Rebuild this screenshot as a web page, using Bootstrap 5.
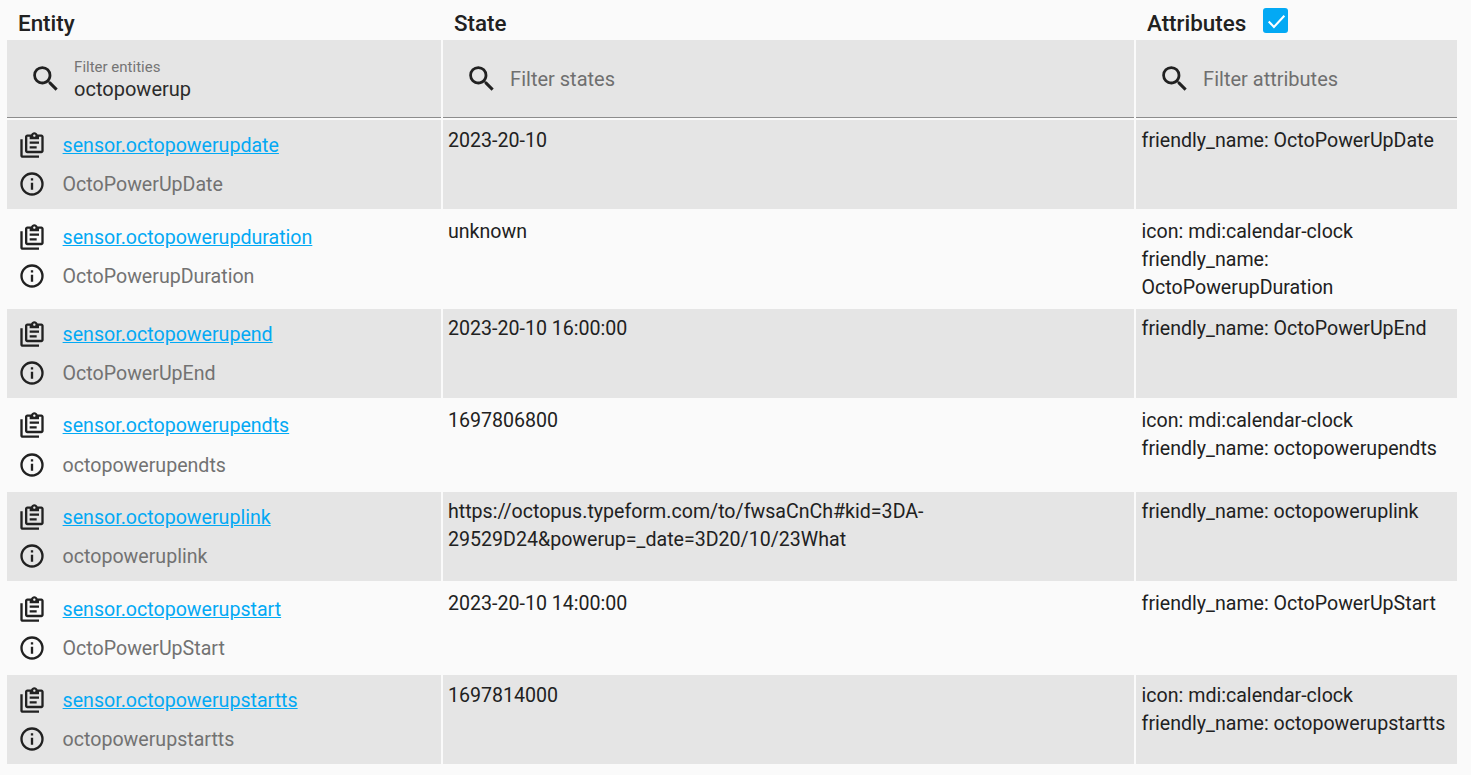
<!DOCTYPE html>
<html lang="en">
<head>
<meta charset="utf-8">
<title>States</title>
<link href="https://cdn.jsdelivr.net/npm/bootstrap@5.3.0/dist/css/bootstrap.min.css" rel="stylesheet">
<style>
html,body{background:#fafafa;height:775px;overflow:hidden}
body{font-family:Roboto,"Liberation Sans",sans-serif;font-size:19.6px;line-height:28px;color:#212121;padding:0 12px 0 5px}
.states-table{table-layout:fixed;border-collapse:separate;border-spacing:2px 0;width:1454px;margin:0}
.states-table th,.states-table td{padding:0;vertical-align:top;font-weight:400}
.col-entity{width:434px}.col-state{width:691px}.col-attrs{width:321px}
.states-table .head-row th{height:40px;font-weight:500;font-size:22.4px;padding:9px 0 0 11px;line-height:28px;white-space:nowrap}
.attr-toggle.form-check-input{width:25px;height:25px;margin:0 0 0 17px;vertical-align:top;position:relative;top:-1px;border:0;border-radius:3px;background-color:#03a9f4;background-size:100%;background-image:url("data:image/svg+xml,%3Csvg xmlns='http://www.w3.org/2000/svg' viewBox='0 0 24 24'%3E%3Cpath fill='none' stroke='%23fff' stroke-width='2' d='M5.5 13l5 5.2L20.5 7.5'/%3E%3C/svg%3E")}
.states-table .filter-row td{background:#e5e5e5;height:78px;vertical-align:middle;border-bottom:1px solid #8c8c8c}
.filter-box{height:77px;padding-left:21.5px;gap:12px}
.filter-box svg{width:33.6px;height:33.6px;flex:none;fill:#212121}
.filter-stack{padding-top:3px}
.filter-label{font-size:15px;line-height:16px;color:#757575}
.filter-val{font-size:20px;line-height:26px;margin-top:1px;color:#2b2b2b;white-space:nowrap}
.filter-ph{font-size:20px;line-height:26px;color:#6f6f6f;white-space:nowrap}
.states-table .gap-row td{height:2px}
.states-table .data-row td{padding:9px 5.6px 0 5.6px}
.states-table .data-row.h89 td{height:89px;padding-top:6.8px}
.states-table .data-row.h89.tight td{padding-top:5.6px}
.states-table .data-row.h100 td{height:100px}
.states-table .data-row.h94 td{height:94px}
.states-table .data-row.shaded td{background:#e5e5e5}
.states-table .data-row.h89 td:first-child{padding-top:6.4px}
.states-table .data-row.h94 td:first-child{padding-top:8.8px}
.states-table .data-row.h94.late td:first-child{padding-top:9px}
.states-table .data-row td:nth-child(2){padding-left:5px}
.ent-line{height:39.2px;padding-left:7px;gap:17px}
.ent-line svg{width:28px;height:28px;flex:none;fill:#212121;margin:0 0 2px -2px}
.ent-link{color:#03a9f4}
.ent-name{color:#727272}
</style>
</head>
<body>
<table class="states-table">
<colgroup><col class="col-entity"><col class="col-state"><col class="col-attrs"></colgroup>
<thead>
<tr class="head-row"><th>Entity</th><th>State</th><th>Attributes<input class="form-check-input attr-toggle" type="checkbox" checked aria-label="Attributes"></th></tr>
<tr class="filter-row">
<td><div class="d-flex align-items-center filter-box"><svg viewBox="0 0 24 24"><path d="M9.5,3A6.5,6.5 0 0,1 16,9.5C16,11.11 15.41,12.59 14.44,13.73L14.71,14H15.5L20.5,19L19,20.5L14,15.5V14.71L13.73,14.44C12.59,15.41 11.11,16 9.5,16A6.5,6.5 0 0,1 3,9.5A6.5,6.5 0 0,1 9.5,3M9.5,5C7,5 5,7 5,9.5C5,12 7,14 9.5,14C12,14 14,12 14,9.5C14,7 12,5 9.5,5Z"/></svg><div class="filter-stack"><div class="filter-label">Filter entities</div><div class="filter-val">octopowerup</div></div></div></td>
<td><div class="d-flex align-items-center filter-box"><svg viewBox="0 0 24 24"><path d="M9.5,3A6.5,6.5 0 0,1 16,9.5C16,11.11 15.41,12.59 14.44,13.73L14.71,14H15.5L20.5,19L19,20.5L14,15.5V14.71L13.73,14.44C12.59,15.41 11.11,16 9.5,16A6.5,6.5 0 0,1 3,9.5A6.5,6.5 0 0,1 9.5,3M9.5,5C7,5 5,7 5,9.5C5,12 7,14 9.5,14C12,14 14,12 14,9.5C14,7 12,5 9.5,5Z"/></svg><div class="filter-ph">Filter states</div></div></td>
<td><div class="d-flex align-items-center filter-box"><svg viewBox="0 0 24 24"><path d="M9.5,3A6.5,6.5 0 0,1 16,9.5C16,11.11 15.41,12.59 14.44,13.73L14.71,14H15.5L20.5,19L19,20.5L14,15.5V14.71L13.73,14.44C12.59,15.41 11.11,16 9.5,16A6.5,6.5 0 0,1 3,9.5A6.5,6.5 0 0,1 9.5,3M9.5,5C7,5 5,7 5,9.5C5,12 7,14 9.5,14C12,14 14,12 14,9.5C14,7 12,5 9.5,5Z"/></svg><div class="filter-ph">Filter attributes</div></div></td>
</tr>
<tr class="gap-row"><td></td><td></td><td></td></tr>
</thead>
<tbody id="rows"></tbody>
</table>
<svg width="0" height="0" class="position-absolute"><defs>
<symbol id="ic-clip" viewBox="0 0 24 24"><path d="M4 7V21H18V23H4C2.9 23 2 22.1 2 21V7H4M20 3C21.1 3 22 3.9 22 5V17C22 18.1 21.1 19 20 19H8C6.9 19 6 18.1 6 17V5C6 3.9 6.9 3 8 3H11.18C11.6 1.84 12.7 1 14 1C15.3 1 16.4 1.84 16.82 3H20M14 3C13.45 3 13 3.45 13 4S13.45 5 14 5 15 4.55 15 4 14.55 3 14 3M10 7V5H8V17H20V5H18V7H10M18 11H10V9H18V11M16 15H10V13H16V15Z"/></symbol>
<symbol id="ic-info" viewBox="0 0 24 24"><path d="M11,9H13V7H11M12,20C7.59,20 4,16.41 4,12C4,7.59 7.59,4 12,4C16.41,4 20,7.59 20,12C20,16.41 16.41,20 12,20M12,2A10,10 0 0,0 2,12A10,10 0 0,0 12,22A10,10 0 0,0 22,12A10,10 0 0,0 12,2M11,17H13V11H11V17Z"/></symbol>
</defs></svg>
<script>
const data=[
["sensor.octopowerupdate","OctoPowerUpDate",["2023-20-10"],["friendly_name: OctoPowerUpDate"],"h89"],
["sensor.octopowerupduration","OctoPowerupDuration",["unknown"],["icon: mdi:calendar-clock","friendly_name:","OctoPowerupDuration"],"h100"],
["sensor.octopowerupend","OctoPowerUpEnd",["2023-20-10 16:00:00"],["friendly_name: OctoPowerUpEnd"],"h89 tight"],
["sensor.octopowerupendts","octopowerupendts",["1697806800"],["icon: mdi:calendar-clock","friendly_name: octopowerupendts"],"h94"],
["sensor.octopoweruplink","octopoweruplink",["https://octopus.typeform.com/to/fwsaCnCh#kid=3DA-","29529D24&powerup=_date=3D20/10/23What"],["friendly_name: octopoweruplink"],"h89 tight"],
["sensor.octopowerupstart","OctoPowerUpStart",["2023-20-10 14:00:00"],["friendly_name: OctoPowerUpStart"],"h94 late"],
["sensor.octopowerupstartts","octopowerupstartts",["1697814000"],["icon: mdi:calendar-clock","friendly_name: octopowerupstartts"],"h89"]];
document.getElementById('rows').innerHTML=data.map((r,i)=>`<tr class="data-row ${r[4]}${i%2?'':' shaded'}"><td><div class="d-flex align-items-center ent-line"><svg><use href="#ic-clip"/></svg><a class="ent-link" href="#">${r[0]}</a></div><div class="d-flex align-items-center ent-line"><svg><use href="#ic-info"/></svg><span class="ent-name">${r[1]}</span></div></td><td><div>${r[2].map(s=>s.replace(/&/g,'&amp;')).join('<br>')}</div></td><td><div>${r[3].join('<br>')}</div></td></tr>`).join('');
</script>
<script src="https://cdn.jsdelivr.net/npm/bootstrap@5.3.0/dist/js/bootstrap.bundle.min.js"></script>
</body>
</html>
